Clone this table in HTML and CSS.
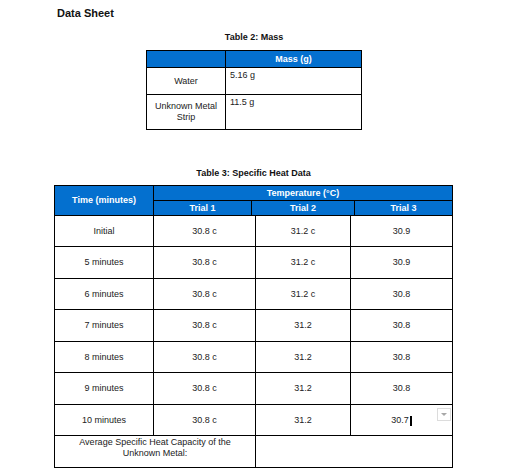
FILE: index.html
```html
<!DOCTYPE html>
<html lang="en">
<head>
<meta charset="utf-8">
<title>Data Sheet</title>
<link rel="stylesheet" href="styles.css">
</head>
<body>
<main class="sheet">
  <h1 class="title">Data Sheet</h1>

  <section class="block mass">
    <h2 class="caption">Table 2: Mass</h2>
    <div class="grid mass-grid">
      <div class="cell head"></div>
      <div class="cell head">Mass (g)</div>
      <div class="cell label">Water</div>
      <div class="cell value">5.16 g</div>
      <div class="cell label">Unknown Metal Strip</div>
      <div class="cell value">11.5 g</div>
    </div>
  </section>

  <section class="block heat">
    <h2 class="caption caption-heat">Table 3: Specific Heat Data</h2>
    <div class="grid heat-head">
      <div class="cell head time">Time (minutes)</div>
      <div class="cell head temp">Temperature (°C)</div>
      <div class="cell head">Trial 1</div>
      <div class="cell head">Trial 2</div>
      <div class="cell head">Trial 3</div>
    </div>
    <div class="grid heat-body">
      <div class="cell">Initial</div><div class="cell">30.8 c</div><div class="cell">31.2 c</div><div class="cell">30.9</div>
      <div class="cell">5 minutes</div><div class="cell">30.8 c</div><div class="cell">31.2 c</div><div class="cell">30.9</div>
      <div class="cell">6 minutes</div><div class="cell">30.8 c</div><div class="cell">31.2 c</div><div class="cell">30.8</div>
      <div class="cell">7 minutes</div><div class="cell">30.8 c</div><div class="cell">31.2</div><div class="cell">30.8</div>
      <div class="cell">8 minutes</div><div class="cell">30.8 c</div><div class="cell">31.2</div><div class="cell">30.8</div>
      <div class="cell">9 minutes</div><div class="cell">30.8 c</div><div class="cell">31.2</div><div class="cell">30.8</div>
      <div class="cell">10 minutes</div><div class="cell">30.8 c</div><div class="cell">31.2</div>
      <div class="cell editing">30.7<span class="caret"></span><span class="dropdown"><span class="arrow"></span></span></div>
      <div class="cell summary">Average Specific Heat Capacity of the Unknown Metal:</div>
      <div class="cell summary-value"></div>
    </div>
  </section>
</main>
</body>
</html>
```

FILE: styles.css
```css
html, body {
  margin: 0;
  padding: 0;
  background: #ffffff;
}

body {
  font-family: "Liberation Sans", Arial, sans-serif;
  color: #222222;
  width: 510px;
  height: 474px;
  overflow: hidden;
}

.sheet {
  display: flex;
  flex-direction: column;
}

.title {
  margin: 7px 0 0 57px;
  font-size: 11px;
  line-height: 13px;
  font-weight: bold;
  color: #111111;
}

.block {
  display: flex;
  flex-direction: column;
}

.mass {
  margin: 12px 0 0 146px;
  width: 216px;
}

.heat {
  margin: 38px 0 0 54px;
  width: 399px;
}

.caption {
  margin: 0 0 7px 0;
  font-size: 9px;
  line-height: 11px;
  font-weight: bold;
  text-align: center;
  color: #111111;
}

.caption-heat {
  margin-bottom: 6px;
}

.grid {
  display: grid;
  background: #000000;
  gap: 1px;
  padding: 1px;
}

.cell {
  background: #ffffff;
  font-size: 9px;
  line-height: 11px;
  display: flex;
  align-items: center;
  justify-content: center;
  text-align: center;
}

.cell.head {
  background: #0470cf;
  color: #ffffff;
  font-weight: bold;
}

.mass-grid {
  grid-template-columns: 78px 135px;
  grid-template-rows: 16px 26px 34px;
}

.mass-grid .label {
  padding: 0 4px;
}

.mass-grid .value {
  justify-content: flex-start;
  align-items: flex-start;
  padding: 2px 0 0 4px;
}

.heat-head {
  grid-template-columns: 98px 97px 102px 97px;
  grid-template-rows: 14px 14px;
}

.heat-head .time {
  grid-row: span 2;
}

.heat-head .temp {
  grid-column: span 3;
}

.heat-body {
  padding-top: 0;
  grid-template-columns: 98px 101px 94px 101px;
  grid-template-rows: 30px 31px 30px 31px 30px 31px 30px 31px;
}

.editing {
  position: relative;
}

.caret {
  display: inline-block;
  width: 2px;
  height: 10px;
  margin-left: 1px;
  margin-top: 1px;
  background: #000000;
}

.dropdown {
  position: absolute;
  top: 3px;
  right: 1px;
  width: 12px;
  height: 11px;
  border: 1px solid #dcdcdc;
  background: #ffffff;
  display: flex;
  align-items: center;
  justify-content: center;
}

.arrow {
  width: 0;
  height: 0;
  border-left: 3px solid transparent;
  border-right: 3px solid transparent;
  border-top: 3px solid #a8a8a8;
}

.summary {
  grid-column: span 2;
  align-items: flex-start;
  padding: 1px 20px 0;
}

.summary-value {
  grid-column: span 2;
}
```
